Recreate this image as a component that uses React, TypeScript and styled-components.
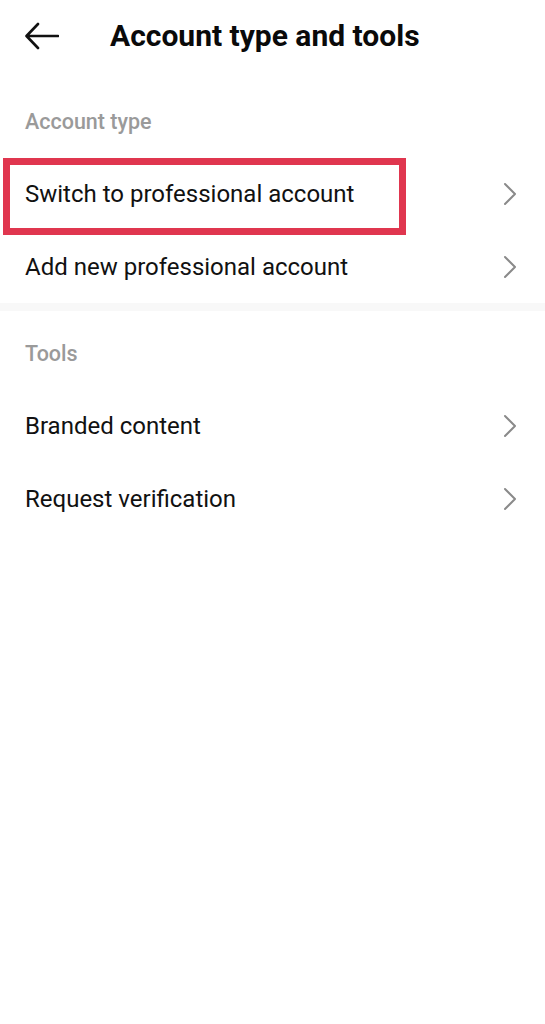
import React from 'react';
import { styled, createGlobalStyle } from 'styled-components';

const GlobalStyle = createGlobalStyle`
  html, body {
    margin: 0;
    padding: 0;
    background: #ffffff;
  }
  body {
    font-family: Roboto, 'Noto Sans', 'Liberation Sans', sans-serif;
    color: #111111;
  }
`;

const Page = styled.div`
  width: 545px;
  min-height: 1024px;
  background: #ffffff;
`;

const Header = styled.header`
  display: flex;
  align-items: center;
  height: 72px;
  padding-left: 25px;
  margin-bottom: 7px;
`;

const BackButton = styled.button`
  all: unset;
  display: flex;
  align-items: center;
  width: 34px;
  height: 28px;
  margin-right: 51px;
  cursor: pointer;
`;

const Title = styled.h1`
  margin: 0;
  font-size: 30px;
  line-height: 36px;
  font-weight: 700;
  color: #0a0a0a;
`;

const Section = styled.section<{ $divider?: boolean }>`
  border-bottom: ${(p) => (p.$divider ? '8px solid #f8f8f8' : 'none')};
`;

const SectionTitle = styled.h2`
  margin: 0;
  padding: 29px 25px 21px;
  font-size: 21.5px;
  line-height: 28px;
  font-weight: 500;
  color: #9a9a9a;
`;

const Row = styled.div`
  position: relative;
  display: flex;
  align-items: center;
  justify-content: space-between;
  height: 73px;
  padding: 0 28px 0 25px;
  font-size: 24px;
  color: #111111;
  cursor: pointer;
`;

const Highlight = styled.div`
  position: absolute;
  left: 3px;
  top: 1px;
  width: 403px;
  height: 77px;
  box-sizing: border-box;
  border: 7px solid #e0364f;
  pointer-events: none;
`;

const Chevron = () => (
  <svg width="14" height="24" viewBox="0 0 14 24" fill="none">
    <path d="M2 2 L12 12 L2 22" stroke="#8a8a8a" strokeWidth="2" strokeLinecap="round" strokeLinejoin="round" />
  </svg>
);

const BackArrow = () => (
  <svg width="34" height="28" viewBox="0 0 34 28" fill="none">
    <path
      d="M33 14 H2 M13 2 L1.5 14 L13 26"
      stroke="#111"
      strokeWidth="2.6"
      strokeLinecap="round"
      strokeLinejoin="round"
    />
  </svg>
);

interface IItem {
  label: string;
  highlighted?: boolean;
}

const SECTIONS: { title: string; items: IItem[] }[] = [
  {
    title: 'Account type',
    items: [
      { label: 'Switch to professional account', highlighted: true },
      { label: 'Add new professional account' },
    ],
  },
  {
    title: 'Tools',
    items: [{ label: 'Branded content' }, { label: 'Request verification' }],
  },
];

export default function App() {
  return (
    <Page>
      <GlobalStyle />
      <Header>
        <BackButton aria-label="Back">
          <BackArrow />
        </BackButton>
        <Title>Account type and tools</Title>
      </Header>
      {SECTIONS.map((section, i) => (
        <Section key={section.title} $divider={i === 0}>
          <SectionTitle>{section.title}</SectionTitle>
          {section.items.map((item) => (
            <Row key={item.label}>
              {item.highlighted && <Highlight />}
              <span>{item.label}</span>
              <Chevron />
            </Row>
          ))}
        </Section>
      ))}
    </Page>
  );
}
